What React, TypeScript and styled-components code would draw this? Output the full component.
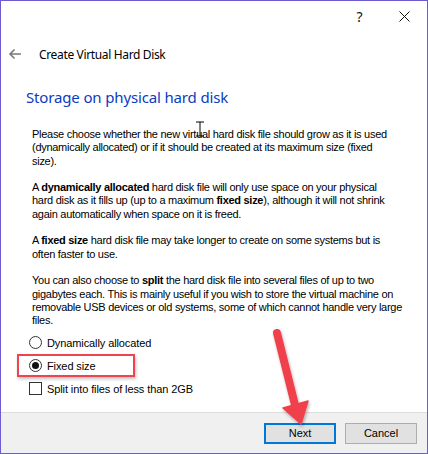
import React from "react";
import styled, { createGlobalStyle } from "styled-components";

const GlobalStyle = createGlobalStyle`
  html, body { margin: 0; padding: 0; background: #ffffff; }
  * { box-sizing: border-box; }
`;

const Window = styled.div`
  position: relative;
  width: 428px;
  height: 454px;
  border: 1px solid #6d5bd0;
  background: #ffffff;
  display: flex;
  flex-direction: column;
  font-family: "Liberation Sans", Arial, sans-serif;
  color: #000000;
  overflow: hidden;
`;

const TitleBar = styled.div`
  height: 30px;
  display: flex;
  justify-content: flex-end;
  align-items: center;
`;

const TitleButton = styled.div`
  width: 45px;
  height: 30px;
  display: flex;
  align-items: center;
  justify-content: center;
  font-family: "Noto Sans", sans-serif;
  font-size: 14px;
  color: #111;
`;

const Header = styled.div`
  height: 46px;
  display: flex;
  align-items: center;
  padding-left: 7px;
`;

const BackIcon = styled.svg`
  width: 14px;
  height: 12px;
  margin-right: 17px;
`;

const HeaderTitle = styled.div`
  font-family: "Noto Sans", sans-serif;
  font-size: 12px;
  letter-spacing: -0.35px;
  color: #000;
`;

const Content = styled.div`
  padding: 10px 10px 0 25px;
  display: flex;
  flex-direction: column;
`;

const Heading = styled.div`
  font-family: "Noto Sans", sans-serif;
  font-size: 15px;
  line-height: 20px;
  letter-spacing: -0.15px;
  color: #0b3cc1;
  margin-bottom: 21px;
`;

const Body = styled.div`
  padding-left: 6px;
  font-family: "Liberation Sans", Arial, sans-serif;
  font-size: 11px;
  line-height: 13.3px;
  letter-spacing: -0.28px;
  white-space: nowrap;
  color: #000;
`;

const Para = styled.p`
  margin: 0 0 13.3px 0;
  &:last-child { margin-bottom: 0; }
`;

const Options = styled.div`
  margin-top: 4px;
  padding-left: 3px;
  display: flex;
  flex-direction: column;
`;

const OptionRow = styled.div`
  position: relative;
  height: 23px;
  display: flex;
  align-items: center;
  font-family: "Liberation Sans", Arial, sans-serif;
  font-size: 11px;
  letter-spacing: -0.1px;
`;

const Radio = styled.span<{ $checked?: boolean }>`
  width: 13px;
  height: 13px;
  border-radius: 50%;
  border: 1px solid #333;
  background: #fff;
  display: inline-flex;
  align-items: center;
  justify-content: center;
  margin-right: 5px;
  &::after {
    content: "";
    display: ${(p) => (p.$checked ? "block" : "none")};
    width: 7px;
    height: 7px;
    border-radius: 50%;
    background: #111;
  }
`;

const Checkbox = styled.span`
  width: 13px;
  height: 13px;
  border: 1px solid #333;
  background: #fff;
  margin-right: 5px;
`;

const Highlight = styled.div`
  position: absolute;
  left: -12px;
  top: 0px;
  width: 118px;
  height: 23px;
  border: 2.5px solid #ee4350;
  box-shadow: 1px 2px 3px rgba(0, 0, 0, 0.25);
  pointer-events: none;
`;

const Footer = styled.div`
  margin-top: auto;
  height: 41px;
  border-top: 1px solid #dcdcdc;
  background: #f0f0f0;
  display: flex;
  justify-content: flex-end;
  align-items: center;
  gap: 9px;
  padding-right: 10px;
`;

const Button = styled.div<{ $primary?: boolean }>`
  width: 72px;
  height: 21px;
  display: flex;
  align-items: center;
  justify-content: center;
  font-family: "Liberation Sans", Arial, sans-serif;
  font-size: 11px;
  background: #e1e1e1;
  border: ${(p) => (p.$primary ? "2px solid #0078d7" : "1px solid #adadad")};
`;

const Overlay = styled.svg`
  position: absolute;
  left: 0;
  top: 0;
  width: 428px;
  height: 454px;
  pointer-events: none;
`;

export default function App() {
  return (
    <>
      <GlobalStyle />
      <Window>
        <TitleBar>
          <TitleButton>?</TitleButton>
          <TitleButton>
            <svg width="11" height="11" viewBox="0 0 11 11">
              <path d="M0.5 0.5 L10.5 10.5 M10.5 0.5 L0.5 10.5" stroke="#111" strokeWidth="1" />
            </svg>
          </TitleButton>
        </TitleBar>
        <Header>
          <BackIcon viewBox="0 0 14 12">
            <path d="M13 6 H2 M6.5 1.5 L2 6 L6.5 10.5" stroke="#7a7a7a" strokeWidth="1.6" fill="none" />
          </BackIcon>
          <HeaderTitle>Create Virtual Hard Disk</HeaderTitle>
        </Header>
        <Content>
          <Heading>Storage on physical hard disk</Heading>
          <Body>
            <Para>
              Please choose whether the new virtual hard disk file should grow as it is used
              <br />
              (dynamically allocated) or if it should be created at its maximum size (fixed
              <br />
              size).
            </Para>
            <Para>
              A <b>dynamically allocated</b> hard disk file will only use space on your physical
              <br />
              hard disk as it fills up (up to a maximum <b>fixed size</b>), although it will not shrink
              <br />
              again automatically when space on it is freed.
            </Para>
            <Para>
              A <b>fixed size</b> hard disk file may take longer to create on some systems but is
              <br />
              often faster to use.
            </Para>
            <Para>
              You can also choose to <b>split</b> the hard disk file into several files of up to two
              <br />
              gigabytes each. This is mainly useful if you wish to store the virtual machine on
              <br />
              removable USB devices or old systems, some of which cannot handle very large
              <br />
              files.
            </Para>
          </Body>
          <Options>
            <OptionRow>
              <Radio />
              Dynamically allocated
            </OptionRow>
            <OptionRow>
              <Radio $checked />
              Fixed size
              <Highlight />
            </OptionRow>
            <OptionRow>
              <Checkbox />
              Split into files of less than 2GB
            </OptionRow>
          </Options>
        </Content>
        <Footer>
          <Button $primary>Next</Button>
          <Button>Cancel</Button>
        </Footer>
        <Overlay viewBox="0 0 428 454">
          <defs>
            <filter id="sh" x="-50%" y="-50%" width="200%" height="200%">
              <feDropShadow dx="1" dy="2" stdDeviation="1.5" floodColor="#000" floodOpacity="0.3" />
            </filter>
          </defs>
          <g filter="url(#sh)">
            <path d="M276 332 L294 404" stroke="#f0414c" strokeWidth="8" strokeLinecap="round" fill="none" />
            <path d="M282 407 L307 400 L300 423 Z" fill="#f0414c" stroke="#f0414c" strokeWidth="1.5" strokeLinejoin="round" />
          </g>
          <path
            d="M195 121 H203 M199 121 V135 M195 135 H203"
            stroke="#000"
            strokeWidth="1"
            fill="none"
          />
        </Overlay>
      </Window>
    </>
  );
}
